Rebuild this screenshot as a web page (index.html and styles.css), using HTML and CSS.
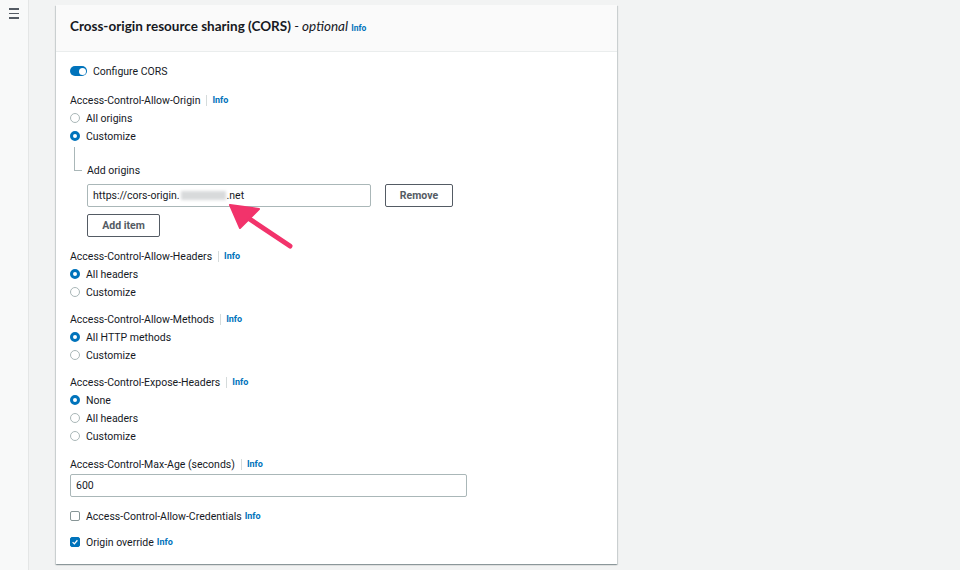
FILE: index.html
```html
<!DOCTYPE html>
<html>
<head>
<meta charset="utf-8">
<link rel="stylesheet" href="styles.css">
</head>
<body>
<div class="page">
  <aside class="sidebar">
    <div class="burger"><span></span><span></span><span></span></div>
  </aside>
  <main class="main">
    <section class="card">
      <header class="card-head">
        <h2 class="title">Cross-origin resource sharing (CORS) <span class="opt">- optional</span> <a class="info">Info</a></h2>
      </header>
      <div class="card-body">
        <div class="toggle-row">
          <span class="toggle"><span class="knob"></span></span>
          <span class="txt">Configure CORS</span>
        </div>

        <div class="field">
          <div class="label"><span>Access-Control-Allow-Origin</span><span class="sep"></span><a class="info">Info</a></div>
          <div class="radio"><span class="rb"></span>All origins</div>
          <div class="radio"><span class="rb on"></span>Customize</div>
          <div class="tree">
            <div class="tree-line"></div>
            <div class="tree-content">
              <div class="sub-label">Add origins</div>
              <div class="origin-row">
                <div class="input wide">https://cors-origin.<span class="blur"></span>.net</div>
                <button class="btn">Remove</button>
              </div>
              <button class="btn add">Add item</button>
            </div>
          </div>
        </div>

        <div class="field">
          <div class="label"><span>Access-Control-Allow-Headers</span><span class="sep"></span><a class="info">Info</a></div>
          <div class="radio"><span class="rb on"></span>All headers</div>
          <div class="radio"><span class="rb"></span>Customize</div>
        </div>

        <div class="field">
          <div class="label"><span>Access-Control-Allow-Methods</span><span class="sep"></span><a class="info">Info</a></div>
          <div class="radio"><span class="rb on"></span>All HTTP methods</div>
          <div class="radio"><span class="rb"></span>Customize</div>
        </div>

        <div class="field">
          <div class="label"><span>Access-Control-Expose-Headers</span><span class="sep"></span><a class="info">Info</a></div>
          <div class="radio"><span class="rb on"></span>None</div>
          <div class="radio"><span class="rb"></span>All headers</div>
          <div class="radio"><span class="rb"></span>Customize</div>
        </div>

        <div class="field spaced">
          <div class="label"><span>Access-Control-Max-Age (seconds)</span><span class="sep"></span><a class="info">Info</a></div>
          <div class="input age">600</div>
        </div>

        <div class="check-row"><span class="cb"></span>Access-Control-Allow-Credentials <a class="info">Info</a></div>
        <div class="check-row last"><span class="cb on"><svg viewBox="0 0 10 10" width="10" height="10"><path d="M2 5.2 L4.2 7.3 L8 2.8" fill="none" stroke="#fff" stroke-width="1.6"/></svg></span>Origin override <a class="info">Info</a></div>
      </div>
      <svg class="arrow" width="70" height="50" viewBox="0 0 70 50">
        <path d="M62 43 L20 15" stroke="#f2336b" stroke-width="5" stroke-linecap="round" fill="none"/>
        <path d="M2 2 L31 6 L12 25 Z" fill="#f2336b" stroke="#f2336b" stroke-width="2" stroke-linejoin="round"/>
      </svg>
    </section>
  </main>
</div>
</body>
</html>
```

FILE: styles.css
```css
* { box-sizing: border-box; }
html, body { margin: 0; padding: 0; }
body {
  width: 960px;
  height: 570px;
  overflow: hidden;
  background: #f2f3f3;
  font-family: "Roboto", "Liberation Sans", sans-serif;
  color: #16191f;
  font-size: 10.5px;
}
.page { display: flex; height: 570px; }
.sidebar {
  width: 29px;
  flex: none;
  background: #f8f9f9;
  border-right: 1px solid #e4e6e6;
  padding: 8px 0 0 9px;
}
.burger { display: flex; flex-direction: column; gap: 3px; width: 10px; }
.burger span { display: block; height: 1.5px; background: #545b64; }
.main { flex: 1; padding: 5px 0 0 27px; }
.card {
  position: relative;
  width: 561px;
  height: 559px;
  background: #fff;
  box-shadow: 0 1px 1px 0 rgba(0,28,36,.25), 1px 1px 1px 0 rgba(0,28,36,.12), -1px 1px 1px 0 rgba(0,28,36,.12);
}
.card-head {
  background: #fafafa;
  border-bottom: 1px solid #eaeded;
  height: 47px;
  padding: 13px 14px 0;
}
.title {
  margin: 0;
  font-family: "Lato", "Liberation Sans", sans-serif;
  font-size: 13.5px;
  font-weight: 700;
  color: #16191f;
}
.opt { font-weight: 400; font-style: italic; }
.info { color: #0073bb; font-weight: 700; font-size: 9px; font-style: normal; letter-spacing: 0; }
.title .info { font-family: "Roboto", sans-serif; font-size: 8.5px; }
.card-body { padding: 12px 14px 0; }
.toggle-row { display: flex; align-items: center; gap: 6px; height: 14px; margin-bottom: 13px; }
.toggle {
  width: 17px; height: 10px; border-radius: 5px; background: #0073bb;
  position: relative; display: inline-block;
}
.knob { position: absolute; right: 1.5px; top: 1.5px; width: 7px; height: 7px; border-radius: 50%; background: #fff; }
.field { margin-bottom: 9px; }
.field.spaced { padding-top: 1px; }
.label { display: flex; align-items: center; height: 18px; }
.sep { width: 1px; height: 11px; background: #d5dbdb; margin: 0 5px 0 6px; }
.radio { display: flex; align-items: center; height: 18px; }
.rb {
  width: 10px; height: 10px; border-radius: 50%; border: 1px solid #aab7b8;
  margin-right: 6px; flex: none; background: #fff;
}
.rb.on { border: 3px solid #0073bb; }
.tree { display: flex; }
.tree-line {
  flex: none;
  width: 8px; height: 24px; margin-left: 4px; margin-top: 2px;
  border-left: 1px solid #aab7b8; border-bottom: 1px solid #aab7b8;
}
.tree-content { padding-left: 5px; padding-top: 18px; }
.sub-label { height: 14px; display: flex; align-items: center; margin-bottom: 7px; }
.origin-row { display: flex; gap: 14px; margin-bottom: 7px; }
.input {
  height: 23px; border: 1px solid #aab7b8; border-radius: 2px;
  padding: 0 5px; display: flex; align-items: center; background: #fff;
}
.input.wide { width: 284px; }
.blur {
  display: inline-block; width: 45px; height: 9px; background: #d8dadb;
  filter: blur(1.5px); margin: 0 1px;
}
.btn {
  display: block;
  height: 23px; border: 1px solid #545b64; border-radius: 2px; background: #fff;
  font-family: inherit; font-size: 10.5px; font-weight: 700; color: #545b64; padding: 0;
}
.origin-row .btn { width: 68px; }
.btn.add { width: 73px; margin-bottom: 1px; }
.input.age { width: 397px; margin-top: 1px; margin-bottom: 12px; }
.check-row { display: flex; align-items: center; height: 14px; margin-bottom: 12px; }
.check-row .info { margin-left: 3px; }
.cb {
  width: 10px; height: 10px; border: 1px solid #879596; border-radius: 2px; margin-right: 6px;
  display: inline-flex; align-items: center; justify-content: center; flex: none;
}
.cb.on { background: #0073bb; border-color: #0073bb; }
.arrow { position: absolute; left: 172px; top: 198px; }
```
